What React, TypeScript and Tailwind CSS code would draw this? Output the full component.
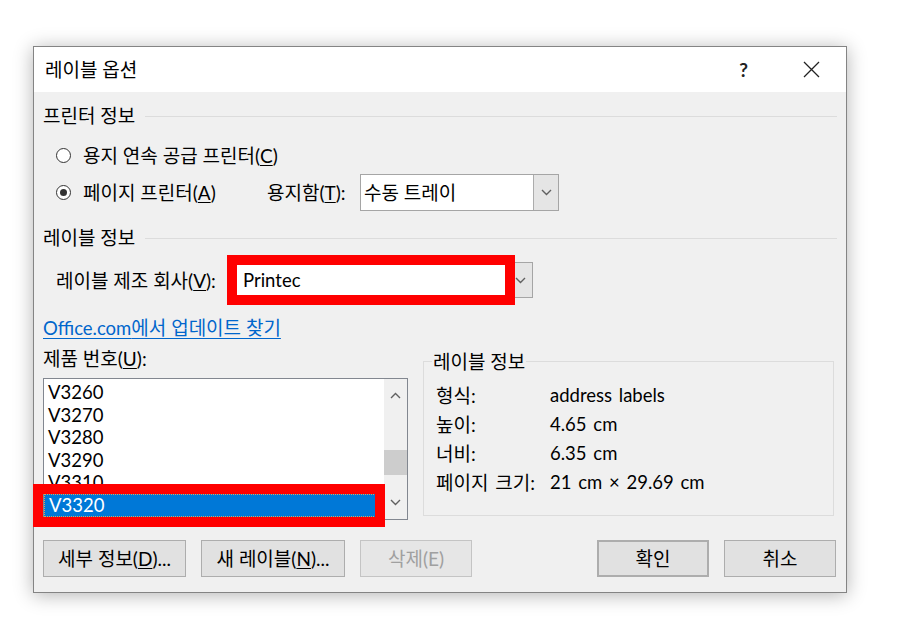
import { ReactNode } from 'react';

function Chevron({ up = false }: { up?: boolean }) {
  return (
    <svg width="11" height="7" viewBox="0 0 11 7" className="block">
      <path
        d={up ? 'M1 6 L5.5 1.5 L10 6' : 'M1 1 L5.5 5.5 L10 1'}
        stroke="#606060"
        strokeWidth="1.4"
        fill="none"
      />
    </svg>
  );
}

function Radio({ checked = false }: { checked?: boolean }) {
  return (
    <span className="w-[15px] h-[15px] rounded-full border border-[#333333] bg-white flex items-center justify-center shrink-0">
      {checked && <span className="w-[7px] h-[7px] rounded-full bg-[#333333]" />}
    </span>
  );
}

function Combo({ children, className, padLeft }: { children: ReactNode; className: string; padLeft: string }) {
  return (
    <div className={`flex border border-[#a5a5a5] bg-white ${className}`}>
      <div className={`flex-1 flex items-center ${padLeft}`}>{children}</div>
      <div className="w-[25px] bg-[#e5e5e5] border-l border-[#acacac] flex items-center justify-center">
        <Chevron />
      </div>
    </div>
  );
}

function Section({ title }: { title: string }) {
  return (
    <div className="h-[30px] flex items-center">
      <span className="text-[19px]">{title}</span>
      <div className="flex-1 h-px bg-[#dcdcdc] ml-[10px] mt-[2px]" />
    </div>
  );
}

function Button({ children, className = '' }: { children: ReactNode; className?: string }) {
  return (
    <div className={`h-[37px] flex items-center justify-center bg-[#e1e1e1] border border-[#adadad] text-[19px] ${className}`}>
      {children}
    </div>
  );
}

const items = ['V3260', 'V3270', 'V3280', 'V3290', 'V3310'];

export default function App() {
  return (
    <div className="w-[900px] h-[632px] bg-white pl-[33px] pt-[46px] font-['Lato','Noto_Sans_CJK_KR',sans-serif] text-[18.5px] leading-none text-black">
      <div className="w-[814px] h-[547px] flex flex-col border border-[#848484] bg-[#f0f0f0] shadow-[0_2px_18px_rgba(0,0,0,0.3)]">
        {/* Title bar */}
        <div className="h-[45px] shrink-0 bg-white flex items-center pl-[11px]">
          <span className="text-[19px]">레이블 옵션</span>
          <span className="ml-auto text-[19px] font-bold text-[#222222]">?</span>
          <svg width="17" height="17" viewBox="0 0 17 17" className="ml-[55px] mr-[26px]">
            <path d="M1 1 L16 16 M16 1 L1 16" stroke="#222222" strokeWidth="1.3" />
          </svg>
        </div>

        {/* Body */}
        <div className="flex-1 flex flex-col px-[9px]">
          <div className="mt-[8px]">
            <Section title="프린터 정보" />
          </div>

          <div className="mt-[7px] h-[36px] flex items-center pl-[13px]">
            <Radio />
            <span className="ml-[12px] text-[19px]">
              용지 연속 공급 프린터(<u className="underline-offset-2">C</u>)
            </span>
          </div>

          <div className="mt-[1px] h-[37px] flex items-center pl-[13px] text-[19px]">
            <div className="w-[211px] flex items-center">
              <Radio checked />
              <span className="ml-[12px]">
                페이지 프린터(<u className="underline-offset-2">A</u>)
              </span>
            </div>
            <span className="w-[93px]">
              용지함(<u className="underline-offset-2">T</u>):
            </span>
            <Combo className="w-[199px] h-[37px]" padLeft="pl-[3px]">
              수동 트레이
            </Combo>
          </div>

          <div className="mt-[11px]">
            <Section title="레이블 정보" />
          </div>

          <div className="mt-[10px] h-[36px] flex items-center pl-[13px]">
            <span className="w-[180px] text-[19px]">
              레이블 제조 회사(<u className="underline-offset-2">V</u>):
            </span>
            <div className="relative">
              <Combo className="w-[297px] h-[36px]" padLeft="pl-[6px]">
                Printec
              </Combo>
              {/* annotation frame */}
              <div className="absolute left-[-9px] top-[-7px] w-[288px] h-[50px] border-[10px] border-[#ff0000]" />
            </div>
          </div>

          <div className="mt-[17px] h-[26px] flex items-center">
            <span className="text-[#0066cc] underline underline-offset-[3px]">
              Office.com<span className="text-[19px]">에서 업데이트 찾기</span>
            </span>
          </div>

          <div className="mt-[4px] flex">
            <div className="w-[365px] flex flex-col">
              <div className="h-[26px] flex items-center text-[19px]">
                제품 번호(<u className="underline-offset-2">U</u>):
              </div>
              <div className="relative mt-[7px]">
                <div className="h-[142px] flex border border-[#828790] bg-white">
                  <div className="flex-1 flex flex-col pt-[2px] overflow-hidden">
                    {items.map((it) => (
                      <div key={it} className="h-[22.6px] shrink-0 flex items-center pl-[4px]">
                        {it}
                      </div>
                    ))}
                    <div className="h-[22.6px] shrink-0 flex items-center pl-[4px] bg-[#0078d7] text-white border border-dotted border-[#d9a35f]">
                      V3320
                    </div>
                  </div>
                  <div className="w-[23px] bg-[#f0f0f0] flex flex-col">
                    <div className="h-[33px] flex items-center justify-center">
                      <Chevron up />
                    </div>
                    <div className="flex-1">
                      <div className="mt-[38px] h-[25px] bg-[#cdcdcd]" />
                    </div>
                    <div className="h-[33px] flex items-center justify-center">
                      <Chevron />
                    </div>
                  </div>
                </div>
                {/* annotation frame */}
                <div className="absolute left-[-10px] top-[106px] w-[352px] h-[43px] border-[10px] border-[#ff0000]" />
              </div>
            </div>

            <fieldset className="ml-[15px] mt-[4px] w-[411px] h-[167px] border border-[#dcdcdc]">
              <legend className="ml-[8px] px-[1px] h-[24px] flex items-center text-[19px]">레이블 정보</legend>
              <div className="mt-[8px] pl-[12px] grid grid-cols-[114px_1fr] auto-rows-[29px] items-center [word-spacing:2px]">
                <span className="text-[19px]">형식:</span>
                <span>address labels</span>
                <span className="text-[19px]">높이:</span>
                <span>4.65 cm</span>
                <span className="text-[19px]">너비:</span>
                <span>6.35 cm</span>
                <span className="text-[19px]">페이지 크기:</span>
                <span>21 cm × 29.69 cm</span>
              </div>
            </fieldset>
          </div>

          <div className="mt-[20px] flex">
            <Button className="w-[143px]">
              세부 정보(<u className="underline-offset-2">D</u>)...
            </Button>
            <Button className="w-[144px] ml-[15px]">
              새 레이블(<u className="underline-offset-2">N</u>)...
            </Button>
            <Button className="w-[112px] ml-[15px] bg-[#e6e6e6] border-[#c4c4c4] text-[#a0a0a0]">삭제(E)</Button>
            <Button className="w-[112px] ml-auto border-2 border-[#0078d7]">확인</Button>
            <Button className="w-[112px] ml-[15px] mr-[1px]">취소</Button>
          </div>
        </div>
      </div>
    </div>
  );
}
